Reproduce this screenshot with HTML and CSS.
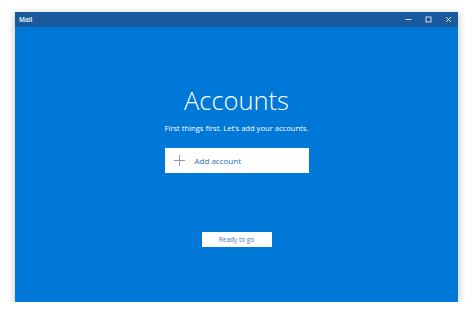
FILE: index.html
```html
<!DOCTYPE html>
<html lang="en">
<head>
    <meta charset="UTF-8">
    <meta name="viewport" content="width=device-width, initial-scale=1.0">
    <title>Mail</title>
    <link rel="stylesheet" href="styles.css">
</head>
<body>
    <div class="window">
        <div class="titlebar">
            <span class="title">Mail</span>
            <div class="controls">
                <span class="ctl"><svg width="7" height="7" viewBox="0 0 7 7"><path d="M0.5 3.5h6" stroke="#fff" stroke-width="0.8"/></svg></span>
                <span class="ctl"><svg width="7" height="7" viewBox="0 0 7 7"><rect x="1" y="1" width="5" height="5" fill="none" stroke="#fff" stroke-width="0.8"/></svg></span>
                <span class="ctl"><svg width="7" height="7" viewBox="0 0 7 7"><path d="M1 1l5 5M6 1l-5 5" stroke="#fff" stroke-width="0.8"/></svg></span>
            </div>
        </div>
        <div class="content">
            <h1>Accounts</h1>
            <p class="sub">First things first. Let’s add your accounts.</p>
            <div class="add">
                <svg class="plus" width="11" height="11" viewBox="0 0 11 11"><path d="M5.5 0v11M0 5.5h11" stroke="#7f8ea3" stroke-width="0.9"/></svg>
                <span>Add account</span>
            </div>
            <div class="ready">Ready to go</div>
        </div>
    </div>
</body>
</html>
```

FILE: styles.css
```css
body { margin: 0; background: #fff; font-family: "Open Sans", "Noto Sans", sans-serif; }
.window { margin: 12px 0 0 15px; width: 443px; height: 290px; display: flex; flex-direction: column; box-shadow: 0 2px 8px rgba(0,0,0,0.25); }
.titlebar { height: 15px; background: #185a9c; display: flex; align-items: center; justify-content: space-between; padding-left: 4px; }
.title { color: #fff; font-size: 6.5px; font-weight: 600; }
.controls { display: flex; height: 100%; }
.ctl { width: 20px; display: flex; align-items: center; justify-content: center; }
.content { flex: 1; background: #0078d7; display: flex; flex-direction: column; align-items: center; color: #fff; }
h1 { margin: 58px 0 0; font-size: 25.5px; font-weight: 300; line-height: 30px; }
.sub { margin: 7px 0 0; font-size: 7.6px; line-height: 12px; }
.add { margin-top: 14px; width: 144px; height: 25px; background: #fff; display: flex; align-items: center; box-sizing: border-box; padding-left: 9px; gap: 10px; }
.add span { color: #1a6cb8; font-size: 8px; }
.ready { margin-top: 59px; width: 70px; height: 15px; background: #fff; color: #4a7bb8; font-size: 6.5px; display: flex; align-items: center; justify-content: center; }
```
